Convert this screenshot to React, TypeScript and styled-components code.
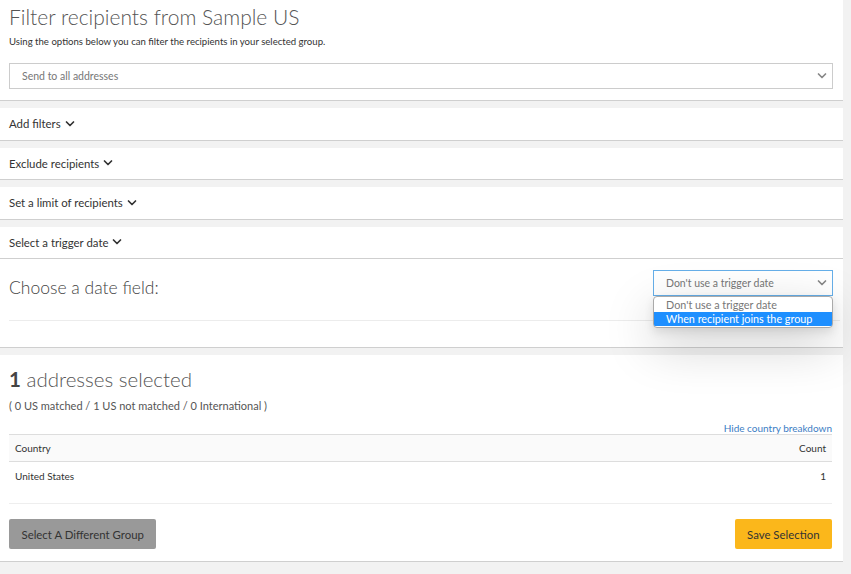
import React from "react";
import styled, { createGlobalStyle } from "styled-components";

const GlobalStyle = createGlobalStyle`
  html, body {
    margin: 0;
    padding: 0;
    background: #f2f2f2;
    font-family: Lato, "Open Sans", Arial, sans-serif;
    color: #333;
  }
`;

const Page = styled.div`
  width: 843px;
  display: flex;
  flex-direction: column;
  gap: 7px;
`;

const Panel = styled.section`
  background: #fff;
  border-bottom: 1px solid #cfcfcf;
  position: relative;
`;

const Intro = styled.div`
  padding: 4px 10px 11px 9px;
`;

const Title = styled.h1`
  margin: 0;
  font-size: 21px;
  line-height: 26px;
  font-weight: 300;
  color: #555;
`;

const Subtitle = styled.p`
  margin: 5px 0 14px;
  font-size: 9.6px;
  line-height: 14px;
  color: #333;
`;

const SelectBox = styled.div<{ focused?: boolean }>`
  height: 24px;
  border: 1px solid ${(p) => (p.focused ? "#66afe9" : "#ccc")};
  display: flex;
  align-items: center;
  justify-content: space-between;
  padding: 0 5px 0 12px;
  font-size: 10.5px;
  color: #777;
  background: #fff;
`;

const Header = styled.div<{ open?: boolean }>`
  height: 31.5px;
  padding: 0 9px;
  display: flex;
  align-items: center;
  gap: 4px;
  font-size: 11.4px;
  color: #333;
  border-bottom: ${(p) => (p.open ? "1px solid #cfcfcf" : "none")};
`;

const DateBody = styled.div`
  padding: 11px 9px 26px 9px;
`;

const DateRow = styled.div`
  display: flex;
  justify-content: space-between;
  align-items: flex-start;
  height: 50px;
  border-bottom: 1px solid #ececec;
  margin-right: -6px;
  padding-right: 7px;
`;

const FieldLabel = styled.div`
  font-size: 17.5px;
  line-height: 22px;
  font-weight: 300;
  color: #444;
  margin-top: 7px;
`;

const DateSelectWrap = styled.div`
  width: 180px;
  position: relative;
`;

const Menu = styled.ul`
  position: absolute;
  top: 26px;
  left: 0;
  right: 0;
  margin: 0;
  padding: 1px 0;
  list-style: none;
  background: #fff;
  border: 1px solid #aaa;
  border-radius: 4px;
  box-shadow: 0 16px 50px rgba(0, 0, 0, 0.22), 0 4px 10px rgba(0, 0, 0, 0.1);
  overflow: hidden;
  z-index: 5;
`;

const MenuItem = styled.li<{ active?: boolean }>`
  font-size: 10.8px;
  line-height: 14px;
  padding: 0 12px;
  color: ${(p) => (p.active ? "#fff" : "#777")};
  background: ${(p) => (p.active ? "#1e8fff" : "transparent")};
`;

const Summary = styled.div`
  padding: 12px 11px 12px 9px;
`;

const Count = styled.h2`
  margin: 0;
  font-size: 20.5px;
  line-height: 24px;
  font-weight: 300;
  color: #555;

  b {
    font-weight: 700;
    color: #444;
  }
`;

const Breakdown = styled.p`
  margin: 7px 0 0;
  font-size: 11px;
  line-height: 16px;
  color: #555;
`;

const ToggleLink = styled.a`
  display: block;
  text-align: right;
  font-size: 10px;
  line-height: 12px;
  color: #3b7dc4;
  margin-top: 8px;
  text-decoration: none;
`;

const Table = styled.table`
  width: 100%;
  border-collapse: collapse;
  font-size: 10px;
  color: #333;
`;

const Th = styled.th<{ right?: boolean }>`
  text-align: ${(p) => (p.right ? "right" : "left")};
  font-weight: 400;
  background: #fafafa;
  border-top: 1px solid #ddd;
  border-bottom: 1px solid #ddd;
  height: 26px;
  padding: 0 6px;
`;

const Td = styled.td<{ right?: boolean }>`
  text-align: ${(p) => (p.right ? "right" : "left")};
  border-bottom: 1px solid #eee;
  height: 42px;
  vertical-align: top;
  padding: 8px 6px 0;
  box-sizing: border-box;
`;

const Actions = styled.div`
  display: flex;
  justify-content: space-between;
  margin-top: 15px;
`;

const Button = styled.button<{ tone: "grey" | "yellow" }>`
  height: 30px;
  border: none;
  border-radius: 2px;
  padding: 0 12.5px;
  font-family: inherit;
  font-size: 11.4px;
  color: #333;
  background: ${(p) => (p.tone === "yellow" ? "#fbb71b" : "#999")};
`;

const Chevron = ({ color = "#333", size = 10 }: { color?: string; size?: number }) => (
  <svg width={size} height={size} viewBox="0 0 10 10">
    <polyline
      points="1.5,3 5,6.5 8.5,3"
      fill="none"
      stroke={color}
      strokeWidth="1.7"
      strokeLinecap="round"
      strokeLinejoin="round"
    />
  </svg>
);

const sections = ["Add filters", "Exclude recipients", "Set a limit of recipients"];

export default function App() {
  return (
    <>
      <GlobalStyle />
      <Page>
        <Panel>
          <Intro>
            <Title>Filter recipients from Sample US</Title>
            <Subtitle>
              Using the options below you can filter the recipients in your selected group.
            </Subtitle>
            <SelectBox>
              <span>Send to all addresses</span>
              <Chevron color="#888" />
            </SelectBox>
          </Intro>
        </Panel>

        {sections.map((s) => (
          <Panel key={s}>
            <Header>
              {s} <Chevron />
            </Header>
          </Panel>
        ))}

        <Panel>
          <Header open>
            Select a trigger date <Chevron />
          </Header>
          <DateBody>
            <DateRow>
              <FieldLabel>Choose a date field:</FieldLabel>
              <DateSelectWrap>
                <SelectBox focused>
                  <span>Don't use a trigger date</span>
                  <Chevron color="#888" />
                </SelectBox>
                <Menu>
                  <MenuItem>Don't use a trigger date</MenuItem>
                  <MenuItem active>When recipient joins the group</MenuItem>
                </Menu>
              </DateSelectWrap>
            </DateRow>
          </DateBody>
        </Panel>

        <Panel>
          <Summary>
            <Count>
              <b>1</b> addresses selected
            </Count>
            <Breakdown>( 0 US matched / 1 US not matched / 0 International )</Breakdown>
            <ToggleLink href="#">Hide country breakdown</ToggleLink>
            <Table>
              <thead>
                <tr>
                  <Th>Country</Th>
                  <Th right>Count</Th>
                </tr>
              </thead>
              <tbody>
                <tr>
                  <Td>United States</Td>
                  <Td right>1</Td>
                </tr>
              </tbody>
            </Table>
            <Actions>
              <Button tone="grey">Select A Different Group</Button>
              <Button tone="yellow">Save Selection</Button>
            </Actions>
          </Summary>
        </Panel>
      </Page>
    </>
  );
}
